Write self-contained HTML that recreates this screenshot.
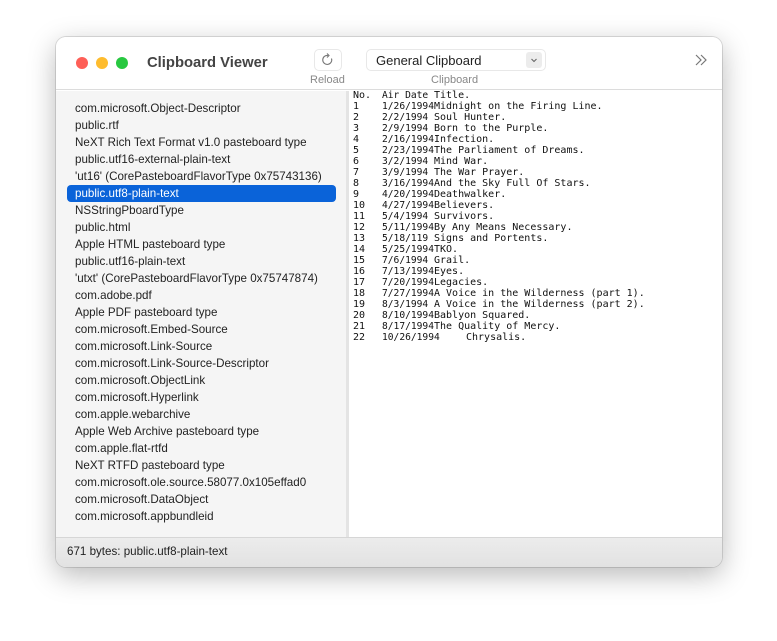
<!DOCTYPE html>
<html><head><meta charset="utf-8"><style>
*{margin:0;padding:0;box-sizing:border-box}
body{width:777px;height:641px;background:#fff;position:relative;overflow:hidden;font-family:"Liberation Sans",sans-serif}
.win{position:absolute;left:56px;top:37px;width:666px;height:530px;border-radius:10px;background:#fff;box-shadow:0 8px 28px rgba(0,0,0,.28),0 0 0 1px rgba(0,0,0,.12);overflow:hidden}
.title{position:absolute;left:0;top:0;width:666px;height:53px;background:#fff;border-bottom:1px solid #dcdcdc}
.dot{position:absolute;top:20px;width:12px;height:12px;border-radius:50%}
.t{position:absolute;font-size:14.8px;font-weight:bold;color:#444;left:91px;top:18px}
.btn{position:absolute;left:258px;top:12px;width:28px;height:22px;border-radius:5px;border:1px solid #e8e8e8;background:#fff}
.sel{position:absolute;left:310px;top:12px;width:180px;height:22px;border-radius:5px;border:1px solid #e8e8e8;background:#fff;font-size:13px;color:#222;padding:3px 0 0 9px}
.arr{position:absolute;right:3px;top:2px;width:16px;height:16px;background:#ececec;border-radius:3px}
.lbl{position:absolute;top:37px;font-size:11px;color:#888}
.side{position:absolute;left:0;top:54px;width:293px;height:446px;background:#f5f5f5;border-right:3px solid #e4e4e4}
.side .it{position:absolute;left:19px;font-size:11.6px;color:#222;white-space:nowrap}
.side .hl{position:absolute;left:11px;top:94px;width:269px;height:17px;background:#0a63d9;border-radius:4px}
.ln{position:absolute;font-family:"DejaVu Sans Mono","Liberation Mono",monospace;font-size:10px;color:#111;white-space:pre;line-height:11px;height:11px}
.ln span:nth-child(1){font-size:9.6px}
.status{position:absolute;left:0;top:500px;width:666px;height:30px;background:linear-gradient(#ececec,#e2e2e2);border-top:1px solid #d6d6d6;font-size:11.6px;color:#222;padding:7px 0 0 11px}
</style></head><body>
<div class="win">
<div class="title">
<div class="dot" style="left:20px;background:#fe5f57"></div>
<div class="dot" style="left:40px;background:#febc2e"></div>
<div class="dot" style="left:60px;background:#28c840"></div>
<div class="t">Clipboard Viewer</div>
<div class="btn"><svg width="28" height="22" viewBox="0 0 28 22" style="position:absolute;left:-1px;top:-1px"><path d="M17.5 9.5 A4.5 4.5 0 1 1 14 6.5" fill="none" stroke="#777" stroke-width="1.1"/><path d="M13 4.5 L15 6.5 L13 8.5" fill="none" stroke="#777" stroke-width="1.1"/></svg></div>
<div class="sel">General Clipboard<div class="arr"><svg width="16" height="16"><path d="M5.5 7 L8 9.5 L10.5 7" fill="none" stroke="#666" stroke-width="1.1"/></svg></div></div>
<div class="lbl" style="left:254px">Reload</div>
<div class="lbl" style="left:375px">Clipboard</div>
<svg style="position:absolute;left:638px;top:16px" width="16" height="14"><path d="M2 2 L7 7 L2 12 M7 2 L12 7 L7 12" fill="none" stroke="#777" stroke-width="1.2"/></svg>
</div>
<div class="side">
<div class="hl"></div>
<div class="it" style="top:11px">com.microsoft.Object-Descriptor</div>
<div class="it" style="top:28px">public.rtf</div>
<div class="it" style="top:45px">NeXT Rich Text Format v1.0 pasteboard type</div>
<div class="it" style="top:62px">public.utf16-external-plain-text</div>
<div class="it" style="top:79px">'ut16' (CorePasteboardFlavorType 0x75743136)</div>
<div class="it" style="top:96px;color:#fff">public.utf8-plain-text</div>
<div class="it" style="top:113px">NSStringPboardType</div>
<div class="it" style="top:130px">public.html</div>
<div class="it" style="top:147px">Apple HTML pasteboard type</div>
<div class="it" style="top:164px">public.utf16-plain-text</div>
<div class="it" style="top:181px">'utxt' (CorePasteboardFlavorType 0x75747874)</div>
<div class="it" style="top:198px">com.adobe.pdf</div>
<div class="it" style="top:215px">Apple PDF pasteboard type</div>
<div class="it" style="top:232px">com.microsoft.Embed-Source</div>
<div class="it" style="top:249px">com.microsoft.Link-Source</div>
<div class="it" style="top:266px">com.microsoft.Link-Source-Descriptor</div>
<div class="it" style="top:283px">com.microsoft.ObjectLink</div>
<div class="it" style="top:300px">com.microsoft.Hyperlink</div>
<div class="it" style="top:317px">com.apple.webarchive</div>
<div class="it" style="top:334px">Apple Web Archive pasteboard type</div>
<div class="it" style="top:351px">com.apple.flat-rtfd</div>
<div class="it" style="top:368px">NeXT RTFD pasteboard type</div>
<div class="it" style="top:385px">com.microsoft.ole.source.58077.0x105effad0</div>
<div class="it" style="top:402px">com.microsoft.DataObject</div>
<div class="it" style="top:419px">com.microsoft.appbundleid</div>
</div>
<div class="status">671 bytes: public.utf8-plain-text</div>
</div>
<div id="rows" style="position:absolute;left:353px;top:90px">
<div class="ln" style="top:0">No.<span style="position:absolute;left:29px">Air Date</span><span style="position:absolute;left:81px">Title.</span></div>
<div class="ln" style="top:11px">1<span style="position:absolute;left:29px">1/26/1994</span><span style="position:absolute;left:81px">Midnight on the Firing Line.</span></div>
<div class="ln" style="top:22px">2<span style="position:absolute;left:29px">2/2/1994</span><span style="position:absolute;left:81px">Soul Hunter.</span></div>
<div class="ln" style="top:33px">3<span style="position:absolute;left:29px">2/9/1994</span><span style="position:absolute;left:81px">Born to the Purple.</span></div>
<div class="ln" style="top:44px">4<span style="position:absolute;left:29px">2/16/1994</span><span style="position:absolute;left:81px">Infection.</span></div>
<div class="ln" style="top:55px">5<span style="position:absolute;left:29px">2/23/1994</span><span style="position:absolute;left:81px">The Parliament of Dreams.</span></div>
<div class="ln" style="top:66px">6<span style="position:absolute;left:29px">3/2/1994</span><span style="position:absolute;left:81px">Mind War.</span></div>
<div class="ln" style="top:77px">7<span style="position:absolute;left:29px">3/9/1994</span><span style="position:absolute;left:81px">The War Prayer.</span></div>
<div class="ln" style="top:88px">8<span style="position:absolute;left:29px">3/16/1994</span><span style="position:absolute;left:81px">And the Sky Full Of Stars.</span></div>
<div class="ln" style="top:99px">9<span style="position:absolute;left:29px">4/20/1994</span><span style="position:absolute;left:81px">Deathwalker.</span></div>
<div class="ln" style="top:110px">10<span style="position:absolute;left:29px">4/27/1994</span><span style="position:absolute;left:81px">Believers.</span></div>
<div class="ln" style="top:121px">11<span style="position:absolute;left:29px">5/4/1994</span><span style="position:absolute;left:81px">Survivors.</span></div>
<div class="ln" style="top:132px">12<span style="position:absolute;left:29px">5/11/1994</span><span style="position:absolute;left:81px">By Any Means Necessary.</span></div>
<div class="ln" style="top:143px">13<span style="position:absolute;left:29px">5/18/119</span><span style="position:absolute;left:81px">Signs and Portents.</span></div>
<div class="ln" style="top:154px">14<span style="position:absolute;left:29px">5/25/1994</span><span style="position:absolute;left:81px">TKO.</span></div>
<div class="ln" style="top:165px">15<span style="position:absolute;left:29px">7/6/1994</span><span style="position:absolute;left:81px">Grail.</span></div>
<div class="ln" style="top:176px">16<span style="position:absolute;left:29px">7/13/1994</span><span style="position:absolute;left:81px">Eyes.</span></div>
<div class="ln" style="top:187px">17<span style="position:absolute;left:29px">7/20/1994</span><span style="position:absolute;left:81px">Legacies.</span></div>
<div class="ln" style="top:198px">18<span style="position:absolute;left:29px">7/27/1994</span><span style="position:absolute;left:81px">A Voice in the Wilderness (part 1).</span></div>
<div class="ln" style="top:209px">19<span style="position:absolute;left:29px">8/3/1994</span><span style="position:absolute;left:81px">A Voice in the Wilderness (part 2).</span></div>
<div class="ln" style="top:220px">20<span style="position:absolute;left:29px">8/10/1994</span><span style="position:absolute;left:81px">Bablyon Squared.</span></div>
<div class="ln" style="top:231px">21<span style="position:absolute;left:29px">8/17/1994</span><span style="position:absolute;left:81px">The Quality of Mercy.</span></div>
<div class="ln" style="top:242px">22<span style="position:absolute;left:29px">10/26/1994</span><span style="position:absolute;left:113px">Chrysalis.</span></div>
</div>
</body></html>
